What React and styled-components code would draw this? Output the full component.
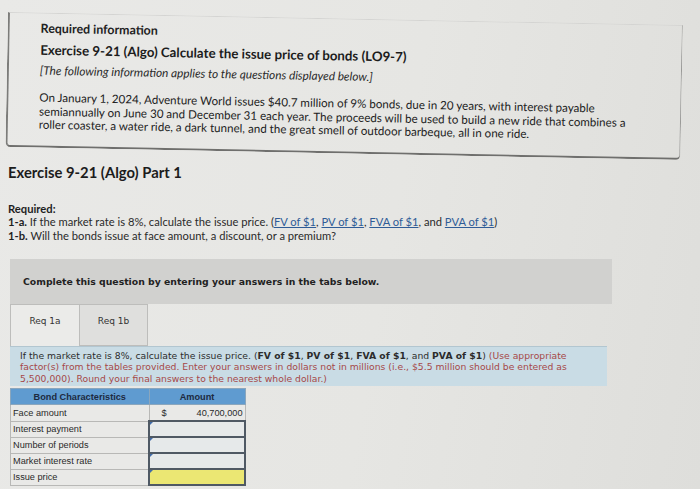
import React from "react";
import styled, { createGlobalStyle } from "styled-components";

const Global = createGlobalStyle`
  html, body { margin: 0; padding: 0; }
  body {
    width: 700px;
    height: 489px;
    overflow: hidden;
    background: linear-gradient(100deg, #e9e9e7 0%, #e6e6e3 55%, #dededb 100%);
    font-family: Lato, "Open Sans", sans-serif;
    color: #1f1f1f;
  }
`;

const Page = styled.div`
  display: flex;
  flex-direction: column;
  padding: 12px 17px 0 8px;
`;

const InfoCard = styled.section`
  border: 1px solid #9a9a98;
  border-left: 2px solid #7c7c7a;
  border-bottom: 2px solid #6f6f6d;
  border-top-color: #d4d4d2;
  border-radius: 0 0 5px 5px;
  padding: 7px 20px 14px 31px;
  transform: rotate(1.1deg);
  transform-origin: left top;
  display: flex;
  flex-direction: column;
`;

const Kicker = styled.div`
  font-weight: 700;
  font-size: 12.4px;
  color: #222;
  line-height: 15px;
`;

const CardTitle = styled.div`
  margin-top: 6px;
  font-weight: 700;
  font-size: 13.3px;
  color: #1c1c1c;
  line-height: 16px;
`;

const Note = styled.div`
  margin-top: 5px;
  font-style: italic;
  font-size: 11.8px;
  color: #2a2a2a;
  line-height: 16px;
`;

const Para = styled.p`
  margin: 12px 0 0;
  font-size: 11.6px;
  line-height: 13.5px;
  color: #222;
  white-space: nowrap;
`;

const PartTitle = styled.h2`
  margin: 16px 0 0;
  font-size: 14.8px;
  font-weight: 700;
  color: #1c1c1c;
  line-height: 18px;
`;

const Required = styled.div`
  margin-top: 21px;
  font-size: 11.2px;
  line-height: 13.7px;
  color: #2a2a2a;
`;

const Strong = styled.b`
  font-weight: 700;
  color: #1e1e1e;
`;

const RefLink = styled.a`
  color: #2f5c97;
  text-decoration: underline;
  text-underline-offset: 1px;
`;

const Question = styled.div`
  margin-top: 16px;
  margin-left: 2px;
  width: 602px;
  font-family: "DejaVu Sans", Verdana, sans-serif;
  display: flex;
  flex-direction: column;
`;

const Banner = styled.div`
  background: #d1d1cf;
  height: 45px;
  display: flex;
  align-items: center;
  padding-left: 13px;
  font-weight: 700;
  font-size: 9.3px;
  color: #222;
`;

const Tabs = styled.div`
  display: flex;
`;

const Tab = styled.div`
  width: ${(p) => p.$w}px;
  height: 42px;
  box-sizing: border-box;
  display: flex;
  align-items: center;
  justify-content: center;
  font-size: 9px;
  color: #333;
  background: ${(p) => (p.$active ? "#ebebe9" : "#dfdfdd")};
  border: 1px solid #bdbdbb;
  border-bottom: ${(p) => (p.$active ? "none" : "1px solid #bdbdbb")};
  margin-left: ${(p) => (p.$first ? 0 : -1)}px;
  padding-bottom: 8px;
`;

const Instructions = styled.div`
  width: 597px;
  box-sizing: border-box;
  background: #c9dce5;
  border-top: 1px solid #b2c6d0;
  padding: 3px 8px 2px 10px;
  font-size: 9.25px;
  line-height: 11.5px;
  color: #2c2c2c;
  white-space: nowrap;
`;

const Warn = styled.span`
  color: #a64848;
`;

const Table = styled.table`
  margin-top: 2px;
  border-collapse: collapse;
  font-family: "Liberation Sans", Arial, sans-serif;
  font-size: 9.2px;
  color: #2a2a2a;
  width: 236px;
  background: #e9e9e7;
`;

const Head = styled.th`
  background: #5f9bd0;
  color: #1d2a3f;
  font-weight: 700;
  height: 15px;
  padding: 0;
  border: 1px solid #8aa6bd;
  width: ${(p) => p.$w}px;
  text-align: center;
`;

const Label = styled.td`
  border: 1px solid #b8b8b6;
  height: 15px;
  padding: 0 0 0 2px;
`;

const AmountCell = styled.td`
  border: 1px solid #b8b8b6;
  padding: 0 2px 0 12px;
  height: 15px;
`;

const AmountWrap = styled.div`
  display: flex;
  justify-content: space-between;
`;

const InputCell = styled.td`
  padding: 0;
  border: 2px solid #4f5964;
  background: ${(p) => (p.$highlight ? "#ebe773" : "#e6e9ea")};
  height: 13px;
  position: relative;

  &::before {
    content: "";
    position: absolute;
    left: 0;
    top: 0;
    border-top: 3px solid #3f6aa8;
    border-right: 3px solid transparent;
  }
`;

const rows = [
  ["Interest payment", false],
  ["Number of periods", false],
  ["Market interest rate", false],
  ["Issue price", true],
];

export default function App() {
  return (
    <>
      <Global />
      <Page>
        <InfoCard>
          <Kicker>Required information</Kicker>
          <CardTitle>Exercise 9-21 (Algo) Calculate the issue price of bonds (LO9-7)</CardTitle>
          <Note>[The following information applies to the questions displayed below.]</Note>
          <Para>
            On January 1, 2024, Adventure World issues $40.7 million of 9% bonds, due in 20 years, with interest payable
            <br />
            semiannually on June 30 and December 31 each year. The proceeds will be used to build a new ride that combines a
            <br />
            roller coaster, a water ride, a dark tunnel, and the great smell of outdoor barbeque, all in one ride.
          </Para>
        </InfoCard>

        <PartTitle>Exercise 9-21 (Algo) Part 1</PartTitle>

        <Required>
          <Strong>Required:</Strong>
          <br />
          <Strong>1-a.</Strong> If the market rate is 8%, calculate the issue price. (
          <RefLink>FV of $1</RefLink>, <RefLink>PV of $1</RefLink>, <RefLink>FVA of $1</RefLink>, and{" "}
          <RefLink>PVA of $1</RefLink>)
          <br />
          <Strong>1-b.</Strong> Will the bonds issue at face amount, a discount, or a premium?
        </Required>

        <Question>
          <Banner>Complete this question by entering your answers in the tabs below.</Banner>
          <Tabs>
            <Tab $w={70} $active $first>Req 1a</Tab>
            <Tab $w={69}>Req 1b</Tab>
          </Tabs>
          <Instructions>
            If the market rate is 8%, calculate the issue price. (<b>FV of $1</b>, <b>PV of $1</b>, <b>FVA of $1</b>, and{" "}
            <b>PVA of $1</b>) <Warn>(Use appropriate</Warn>
            <br />
            <Warn>
              factor(s) from the tables provided. Enter your answers in dollars not in millions (i.e., $5.5 million should be entered as
            </Warn>
            <br />
            <Warn>5,500,000). Round your final answers to the nearest whole dollar.)</Warn>
          </Instructions>
          <Table>
            <thead>
              <tr>
                <Head $w={140}>Bond Characteristics</Head>
                <Head $w={96}>Amount</Head>
              </tr>
            </thead>
            <tbody>
              <tr>
                <Label>Face amount</Label>
                <AmountCell>
                  <AmountWrap>
                    <span>$</span>
                    <span>40,700,000</span>
                  </AmountWrap>
                </AmountCell>
              </tr>
              {rows.map(([label, hi]) => (
                <tr key={label}>
                  <Label>{label}</Label>
                  <InputCell $highlight={hi} />
                </tr>
              ))}
            </tbody>
          </Table>
        </Question>
      </Page>
    </>
  );
}
